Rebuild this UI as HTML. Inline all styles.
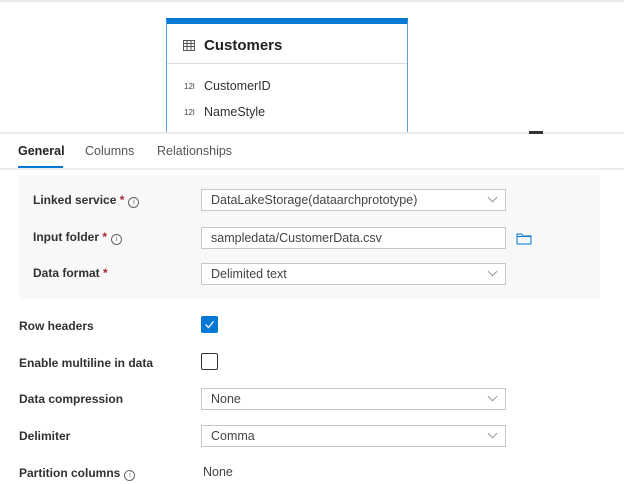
<html><head><style>
body{margin:0;width:624px;height:482px;overflow:hidden;background:#fff;font-family:"Liberation Sans",sans-serif;position:relative;font-size:12.5px;color:#323130}
.a{position:absolute}
.lbl{position:absolute;left:19px;font-weight:bold;font-size:12px;color:#323130}
.req{color:#a4262c}
.inp{position:absolute;left:201px;height:20px;border:1px solid #c8c6c4;background:#fff;line-height:20px;padding-left:9px;width:294px;font-size:12.5px;color:#444}
.chev{position:absolute;right:9px;top:4px;width:6px;height:6px;border-right:1px solid #999;border-bottom:1px solid #999;transform:rotate(45deg)}
.info{display:inline-block;width:9px;height:9px;border:1px solid #666;border-radius:50%;margin-left:4px;vertical-align:0px;font-size:7px;line-height:9px;text-align:center;font-weight:normal;color:#666}
</style></head><body>
<div class="a" style="left:0;top:0;width:624px;height:2px;background:#e8e8e8"></div>
<div class="a" style="left:166px;top:18px;width:240px;height:120px;border:1px solid #5aa0e0;border-top:6px solid #0078d4"></div>
<div class="a" style="left:167px;top:63px;width:240px;height:1px;background:#ddd"></div>
<svg class="a" style="left:183px;top:40px" width="12" height="11"><rect x="0.5" y="0.5" width="11" height="10" fill="none" stroke="#555"/><path d="M0 3.5H12M0 6.5H12M4 0V11M8 0V11" stroke="#555"/></svg>
<div class="a" style="left:204px;top:37px;font-size:15px;font-weight:bold;color:#222">Customers</div>
<div class="a" style="left:184px;top:82px;font-size:8px;color:#444">12l</div>
<div class="a" style="left:204px;top:79px;font-size:12.5px">CustomerID</div>
<div class="a" style="left:184px;top:108px;font-size:8px;color:#444">12l</div>
<div class="a" style="left:204px;top:105px;font-size:12.5px">NameStyle</div>
<div class="a" style="left:0;top:132px;width:624px;height:350px;background:#fff;border-top:2px solid #ececec"></div>
<div class="a" style="left:529px;top:131px;width:14px;height:3px;background:#333"></div>
<div class="a" style="left:18px;top:144px;font-size:12.5px;color:#222;font-weight:bold">General</div>
<div class="a" style="left:18px;top:166px;width:45px;height:2px;background:#0078d4"></div>
<div class="a" style="left:85px;top:144px;color:#555">Columns</div>
<div class="a" style="left:157px;top:144px;color:#555">Relationships</div>
<div class="a" style="left:0;top:168px;width:624px;height:2px;background:#ececec"></div>
<div class="a" style="left:18px;top:175px;width:582px;height:124px;background:#f8f8f8"></div>
<div class="lbl" style="top:193px;left:33px">Linked service <span class="req">*</span><span class="info">i</span></div>
<div class="inp" style="top:189px">DataLakeStorage(dataarchprototype)<div class="chev"></div></div>
<div class="lbl" style="top:230px;left:33px">Input folder <span class="req">*</span><span class="info">i</span></div>
<div class="inp" style="top:227px">sampledata/CustomerData.csv</div>
<svg class="a" style="left:516px;top:232px" width="16" height="13"><path d="M1 2V12H15V4H7L5.5 2Z M1 4.5H15" fill="none" stroke="#0078d4"/></svg>
<div class="lbl" style="top:266px;left:33px">Data format <span class="req">*</span></div>
<div class="inp" style="top:263px">Delimited text<div class="chev"></div></div>
<div class="lbl" style="top:319px">Row headers</div>
<div class="a" style="left:201px;top:316px;width:17px;height:17px;background:#0078d4;border-radius:2px"><svg width="17" height="17"><path d="M4.5 8.5L7.5 11.5L12.5 5.5" fill="none" stroke="#fff" stroke-width="1.3"/></svg></div>
<div class="lbl" style="top:356px">Enable multiline in data</div>
<div class="a" style="left:201px;top:353px;width:15px;height:15px;border:1px solid #333;border-radius:2px"></div>
<div class="lbl" style="top:392px">Data compression</div>
<div class="inp" style="top:388px">None<div class="chev"></div></div>
<div class="lbl" style="top:429px">Delimiter</div>
<div class="inp" style="top:425px">Comma<div class="chev"></div></div>
<div class="lbl" style="top:466px">Partition columns<span class="info">i</span></div>
<div class="a" style="left:203px;top:465px;color:#444">None</div>
</body></html>
